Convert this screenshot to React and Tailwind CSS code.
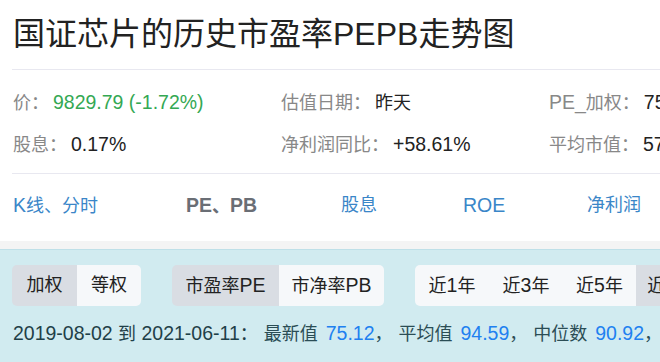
import React from 'react';

const FONT = { fontFamily: '"Liberation Sans", Arial, "Noto Sans CJK SC", sans-serif' };

// Latin runs render a touch wider than the CJK around them in the reference
function T({ children }) {
    const parts = String(children).split(/([\x20-\x7E]+)/);
    return (
        <>
            {parts.map((p, i) =>
                /[\x20-\x7E]/.test(p) ? (
                    <span key={i} className="text-[1.083em]">{p}</span>
                ) : (
                    p
                )
            )}
        </>
    );
}

const stats = [
    [
        { label: '价：', value: '9829.79 (-1.72%)', tone: 'text-[#34a853]' },
        { label: '估值日期：', value: '昨天' },
        { label: 'PE_加权：', value: '75.12' },
    ],
    [
        { label: '股息：', value: '0.17%' },
        { label: '净利润同比：', value: '+58.61%' },
        { label: '平均市值：', value: '573.2亿' },
    ],
];

const tabs = [
    { label: 'K线、分时', w: 'w-[173px]' },
    { label: 'PE、PB', w: 'w-[155px]', active: true },
    { label: '股息', w: 'w-[122px]' },
    { label: 'ROE', w: 'w-[124px]' },
    { label: '净利润', w: 'w-[120px]' },
];

function Segmented({ items }) {
    return (
        <div className="flex shrink-0 rounded-[5px] overflow-hidden h-[41px]">
            {items.map((it) => (
                <div
                    key={it.label}
                    className={`${it.w} flex items-center justify-center shrink-0 text-[18px] text-[#222] ${it.active ? 'bg-[#d9dde3]' : 'bg-[#f6f8fa]'}`}
                >
                    <span><T>{it.label}</T></span>
                </div>
            ))}
        </div>
    );
}

function Stat({ label, value }) {
    return (
        <>
            <span className="ml-[6px] text-[#2b4d55]">{label}</span>
            <span className="ml-[8px] text-[#2080f0]"><T>{value}</T></span>
            <span className="text-[#2b4d55]">，</span>
        </>
    );
}

export default function App() {
    return (
        <div className="w-[660px] h-[362px] overflow-hidden bg-white" style={FONT}>
            <div className="w-[900px]">
                {/* Title + stats */}
                <div className="pl-[12px]">
                    <h1 className="pt-[14px] pb-[15px] pl-[1px] text-[32px] leading-[40px] text-[#222] border-b border-[#e8e8f0]">
                        国证芯片的历史市盈率PEPB走势图
                    </h1>
                    <div className="pt-[12px] pb-[7px] pl-[1px] border-b border-[#e8e8f0]">
                        {stats.map((row, i) => (
                            <div key={i} className="flex h-[42px] items-center text-[18px]">
                                {row.map((s) => (
                                    <div key={s.label} className="w-[268px] shrink-0 flex items-center whitespace-nowrap">
                                        <span className="text-[#888]"><T>{s.label}</T></span>
                                        <span className={`ml-[4px] ${s.tone || 'text-[#222]'}`}><T>{s.value}</T></span>
                                    </div>
                                ))}
                            </div>
                        ))}
                    </div>
                </div>

                {/* Tabs */}
                <div className="flex pl-[13px] pt-[17px] pb-[21px] text-[18px] leading-[28px]">
                    {tabs.map((t) => (
                        <div
                            key={t.label}
                            className={`${t.w} shrink-0 whitespace-nowrap ${t.active ? 'font-bold text-[#6a6e75]' : 'text-[#3a86c8]'}`}
                        >
                            <T>{t.label}</T>
                        </div>
                    ))}
                </div>

                <div className="h-[8px] bg-[#f4f4f4]" />

                {/* Chart controls */}
                <div className="bg-[#d1ebf0] border-t border-[#bfe0e8] pt-[15px] pl-[12px] h-[200px]">
                    <div className="flex gap-[31px]">
                        <Segmented
                            items={[
                                { label: '加权', w: 'w-[65px]', active: true },
                                { label: '等权', w: 'w-[64px]' },
                            ]}
                        />
                        <Segmented
                            items={[
                                { label: '市盈率PE', w: 'w-[107px]', active: true },
                                { label: '市净率PB', w: 'w-[105px]' },
                            ]}
                        />
                        <Segmented
                            items={[
                                { label: '近1年', w: 'w-[74px]' },
                                { label: '近3年', w: 'w-[74px]' },
                                { label: '近5年', w: 'w-[73px]' },
                                { label: '近10年', w: 'w-[80px]', active: true },
                                { label: '全部', w: 'w-[64px]' },
                            ]}
                        />
                    </div>
                    <div className="mt-[13px] pl-[1px] text-[18px] leading-[28px] whitespace-nowrap">
                        <span className="text-[#1f4048]"><T>2019-08-02 到 2021-06-11：</T></span>
                        <Stat label="最新值" value="75.12" />
                        <Stat label="平均值" value="94.59" />
                        <Stat label="中位数" value="90.92" />
                        <Stat label="最小值" value="60.48" />
                    </div>
                </div>
            </div>
        </div>
    );
}
